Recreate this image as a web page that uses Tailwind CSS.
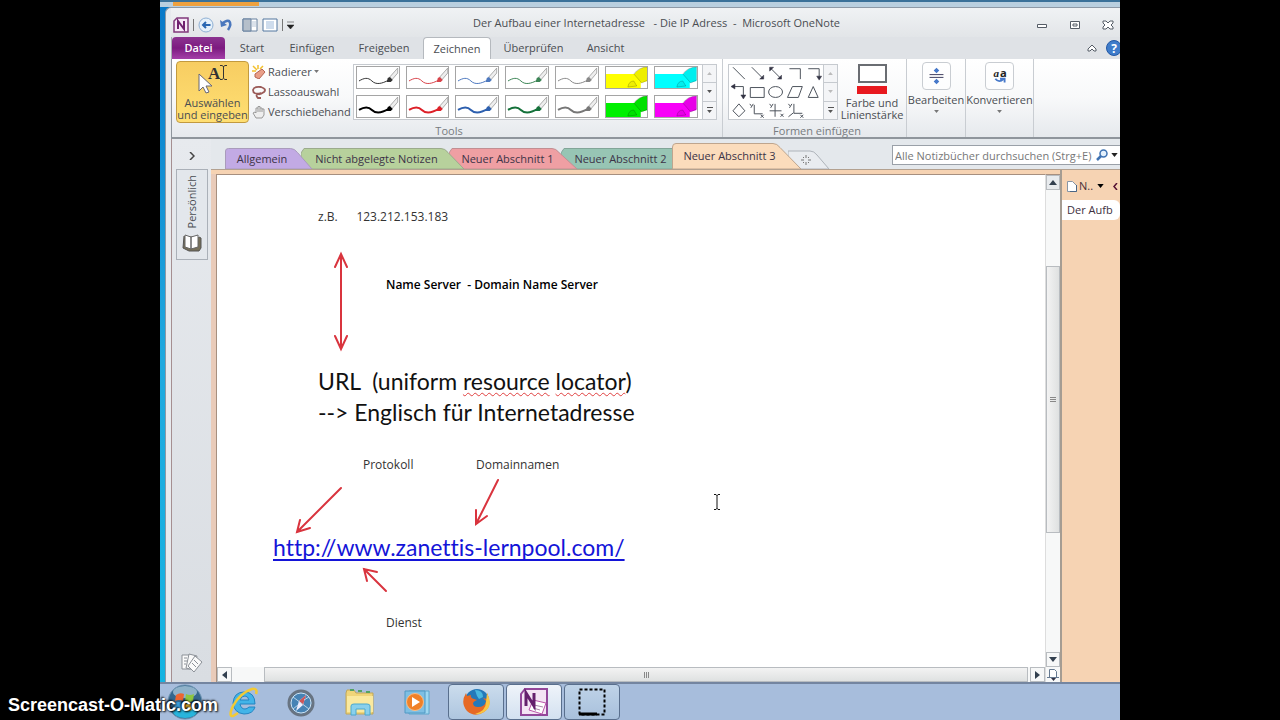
<!DOCTYPE html>
<html lang="de">
<head>
    <meta charset="UTF-8">
    <meta name="viewport" content="width=device-width, initial-scale=1.0">
    <title>Der Aufbau einer Internetadresse - Microsoft OneNote</title>
    <script src="https://cdn.jsdelivr.net/npm/@tailwindcss/browser@4"></script>
</head>
<body class="bg-black font-['Open_Sans','Noto_Sans',sans-serif] text-[11px] leading-3 text-[#4a4d52]">
    <!-- Shared icons -->
    <svg class="hidden">
        <symbol id="pen" viewBox="0 0 42 21">
            <path d="M2 14c5-3 9-4 13 0s10 3 17-1" fill="none" stroke="currentColor"/>
            <path d="M33 10l8-9v5l-6 7z" fill="#eee" stroke="#999" stroke-width=".8"/>
            <path d="M30 15l1-4 2-1 3 3-2 2z" fill="currentColor" stroke="none"/>
        </symbol>
        <symbol id="marker" viewBox="0 0 42 21" preserveAspectRatio="none">
            <path d="M0 7h30v14H0z" fill="currentColor"/>
            <path d="M28 8q5-8 14-8v14l-7 2v5H22q1-5 6-6z" fill="currentColor"/>
            <path d="M28 7q5-7 14-7v13l-6 3zM22 20q1-6 6-6l3 5z" fill="#0001" stroke="#0003"/>
        </symbol>
        <symbol id="down" viewBox="0 0 8 5"><path d="M0 0h8L4 5z" fill="currentColor"/></symbol>
    </svg>

    <div class="relative mx-auto flex min-h-screen w-3/4 flex-col overflow-hidden bg-linear-to-b from-[#0878c8] via-[#1fa9df] to-[#12b5e2]">
        <!-- Window behind -->
        <div class="h-[7px] shrink-0 border-t-2 border-[#3a7199] bg-[#b9cfdf] pl-[13px]">
            <div class="h-1 w-[86px] bg-[#efa13e]"></div>
        </div>

        <!-- OneNote window -->
        <div class="ml-[5px] flex grow flex-col rounded-tl-md border-t border-l border-[#8d99a6] bg-[#e7eaee] pl-[5px]">
            <header class="flex h-[29px] shrink-0 items-center bg-linear-to-b from-[#f0f2f4] to-[#e2e5e8] pr-[6px]">
                <div class="flex w-[302px] shrink-0 items-center gap-1 pt-1 pl-[2px]">
                    <svg class="size-4" viewBox="0 0 16 16"><path d="M4 1h11v14H1V4z" fill="#f6e8f7" stroke="#80397b" stroke-width="1.5"/><path d="M5 12V4l6 8V4" fill="none" stroke="#70206f" stroke-width="2"/></svg>
                    <span class="h-3 w-px bg-[#777]"></span>
                    <button aria-label="Zurück"><svg class="size-4" viewBox="0 0 16 16"><circle cx="8" cy="8" r="7" fill="#e5f1fa" stroke="#8fb0d4"/><path d="M12.500 8H5m3-3L5 8l3 3" fill="none" stroke="#2867b2" stroke-width="2"/></svg></button>
                    <button aria-label="Rückgängig"><svg class="size-4" viewBox="0 0 16 16"><path d="M4 7q4-4 7-3 3 3-1 9" fill="none" stroke="#4a77bd" stroke-width="2.500"/><path d="M2 3l1 7 6-2z" fill="#4a77bd"/></svg></button>
                    <button aria-label="Andocken" class="ml-1"><svg class="size-4" viewBox="0 0 16 16"><path d="M1 2h14v12H1z" fill="#fff" stroke="#66809f"/><path d="M1 2h8v12H1z" fill="#b5bfca" stroke="#66809f"/><path d="M10 5h4m-4 2h4m-4 2h4" stroke="#b7c6d8"/></svg></button>
                    <button aria-label="Ganze Seite"><svg class="size-4" viewBox="0 0 16 16"><path d="M1 2h14v12H1z" fill="#fff" stroke="#53779f"/><path d="M4 5h8m-8 2h8m-8 2h8m-8 2h8" stroke="#9db9da"/></svg></button>
                    <span class="h-3 w-px bg-[#777]"></span>
                    <button aria-label="Anpassen"><svg class="h-2 w-[7px]" viewBox="0 0 7 8"><path d="M0 1h7M0 4h7L3.500 8z" fill="#222" stroke="#222" stroke-width=".5"/></svg></button>
                </div>
                <h1 class="grow whitespace-pre">Der Aufbau einer Internetadresse   - Die IP Adress  -  Microsoft OneNote</h1>
                <div class="flex items-center gap-[21px] pt-1">
                    <button aria-label="Minimieren"><svg class="h-3 w-3" viewBox="0 0 12 12"><path d="M1.500 5.500h9v3h-9z" fill="#fff" stroke="#555c66"/></svg></button>
                    <button aria-label="Maximieren"><svg class="h-3 w-3" viewBox="0 0 12 12"><path d="M1.500 2.500h9v7h-9zM4 5h4v2H4z" fill="#fff" stroke="#555c66"/></svg></button>
                    <button aria-label="Schließen"><svg class="h-3 w-3" viewBox="0 0 12 12"><path d="M1 2h3l2 2 2-2h3v2L9 6l2 2v2H8L6 8l-2 2H1V8l2-2-2-2z" fill="#fff" stroke="#555c66"/></svg></button>
                </div>
            </header>

            <nav class="flex h-[22px] shrink-0 items-stretch border-l border-[#a8adb3] bg-[#dfe2e6]">
                <button class="w-[53px] rounded-t-sm bg-linear-to-b from-[#8c3390] via-[#7c1a80] to-[#a43ea8] font-semibold text-white">Datei</button>
                <button class="w-[54px]">Start</button>
                <button class="w-[66px]">Einfügen</button>
                <button class="w-[78px]">Freigeben</button>
                <button class="w-[68px] rounded-t-sm border border-b-0 border-[#b5b9be] bg-white">Zeichnen</button>
                <button class="w-[85px]">Überprüfen</button>
                <button class="w-[59px]">Ansicht</button>
                <div class="-mr-[2px] ml-auto flex items-center gap-2">
                    <button aria-label="Menüband minimieren"><svg class="h-2 w-3" viewBox="0 0 12 8"><path d="M2 5l4-4 4 4v2H8L6 5 4 7H2z" fill="#fff" stroke="#555c66"/></svg></button>
                    <button aria-label="Hilfe" class="size-4 rounded-full border border-[#2257a5] bg-[#3f7cca] text-xs font-bold text-white">?</button>
                </div>
            </nav>

            <!-- Ribbon -->
            <div class="flex h-20 shrink-0 border-b-2 border-l border-[#8f959c] bg-linear-to-b from-white via-[#f8f9fa] to-[#e6e9ed]">
                <section class="flex w-[551px] shrink-0 flex-col border-r border-[#c9cdd2] pt-[2px] pl-1">
                    <div class="flex h-16">
                        <button class="flex h-[62px] w-[73px] flex-col items-center rounded-sm border border-[#c29a3f] bg-linear-to-b from-[#f7cd62] to-[#ffdf72] pt-[2px]">
                            <svg class="h-8 w-10 shrink-0" viewBox="0 0 40 32"><path d="M6 10v17l4-4 3 6 3-1-3-6h6z" fill="#fff" stroke="#667"/><text x="15" y="15" font-family="Liberation Serif" font-weight="bold" font-size="17" fill="#333">A</text><path d="M27 1.500h2l1.500 1 1.500-1h2M30.500 2v12M27 15.500h2l1.500-1 1.500 1h2" fill="none" stroke="#333"/></svg>
                            <span class="mt-[1px] whitespace-nowrap">Auswählen<br>und eingeben</span>
                        </button>
                        <div class="flex w-[104px] flex-col pl-[3px] whitespace-nowrap">
                            <button class="flex h-[21px] items-center gap-[2px]">
                                <svg class="size-[14px]" viewBox="0 0 14 14"><path d="M1 1l4 4M6 0v4M0 6h4M11 1L8 4" stroke="#f3c02c" stroke-width="1.500"/><path d="M3 9l7-5 3 3-6 7-4-2z" fill="#e99f88" stroke="#b56553"/></svg>
                                Radierer
                                <svg class="h-[3px] w-[5px] text-[#777]"><use href="#down"/></svg>
                            </button>
                            <button class="flex h-5 items-center gap-[2px]">
                                <svg class="size-[14px]" viewBox="0 0 14 14"><path d="M9 8Q1 10 1 5q1-4 8-3 6 2 3 5-4 3-6 2-3 1 0 4h3" fill="none" stroke="#9b5b58" stroke-width="1.800"/></svg>
                                Lassoauswahl
                            </button>
                            <button class="flex h-5 items-center gap-[2px]">
                                <svg class="size-[14px]" viewBox="0 0 14 14"><path d="M4 13L1 8l2-1 1 1V3l2 0V1.500h2V3h2v1h2v6l-2 3zM6 3v4m2-4v4m2-3v3" fill="#eee" stroke="#999"/></svg>
                                Verschiebehand
                            </button>
                        </div>
                        <div class="mt-[3px] flex h-14 w-[364px] justify-between border border-[#c6cacf] bg-white">
                            <div class="grid w-[346px] grid-cols-7 content-start gap-[6px] px-[2px] py-px">
                                <button class="h-[23px] border border-[#a5a5a5] text-[#333]" aria-label="Stift schwarz"><svg class="size-full"><use href="#pen"/></svg></button>
                                <button class="h-[23px] border border-[#a5a5a5] text-[#d8434a]" aria-label="Stift rot"><svg class="size-full"><use href="#pen"/></svg></button>
                                <button class="h-[23px] border border-[#a5a5a5] text-[#4d78be]" aria-label="Stift blau"><svg class="size-full"><use href="#pen"/></svg></button>
                                <button class="h-[23px] border border-[#a5a5a5] text-[#3b8455]" aria-label="Stift grün"><svg class="size-full"><use href="#pen"/></svg></button>
                                <button class="h-[23px] border border-[#a5a5a5] text-[#888]" aria-label="Stift grau"><svg class="size-full"><use href="#pen"/></svg></button>
                                <button class="h-[23px] border border-[#a5a5a5] text-[#ffff00]" aria-label="Textmarker gelb"><svg class="size-full"><use href="#marker"/></svg></button>
                                <button class="h-[23px] border border-[#a5a5a5] text-[#00ffff]" aria-label="Textmarker türkis"><svg class="size-full"><use href="#marker"/></svg></button>
                                <button class="h-[23px] border border-[#a5a5a5] text-black" aria-label="Stift schwarz, dick"><svg class="size-full stroke-2"><use href="#pen"/></svg></button>
                                <button class="h-[23px] border border-[#a5a5a5] text-[#dd2028]" aria-label="Stift rot, dick"><svg class="size-full stroke-2"><use href="#pen"/></svg></button>
                                <button class="h-[23px] border border-[#a5a5a5] text-[#2d5fae]" aria-label="Stift blau, dick"><svg class="size-full stroke-2"><use href="#pen"/></svg></button>
                                <button class="h-[23px] border border-[#a5a5a5] text-[#14713a]" aria-label="Stift grün, dick"><svg class="size-full stroke-2"><use href="#pen"/></svg></button>
                                <button class="h-[23px] border border-[#a5a5a5] text-[#777]" aria-label="Stift grau, dick"><svg class="size-full stroke-2"><use href="#pen"/></svg></button>
                                <button class="h-[23px] border border-[#a5a5a5] text-[#00f000]" aria-label="Textmarker grün"><svg class="size-full"><use href="#marker"/></svg></button>
                                <button class="h-[23px] border border-[#a5a5a5] text-[#f800f8]" aria-label="Textmarker magenta"><svg class="size-full"><use href="#marker"/></svg></button>
                            </div>
                            <div class="flex w-[14px] flex-col divide-y divide-[#c6cacf] border-l border-[#c6cacf] bg-[#f4f5f7] text-[#555]">
                                <button class="flex flex-1 items-center justify-center text-[#bbb]" aria-label="Nach oben"><svg class="h-[3px] w-[5px] rotate-180"><use href="#down"/></svg></button>
                                <button class="flex flex-1 items-center justify-center" aria-label="Nach unten"><svg class="h-[3px] w-[5px]"><use href="#down"/></svg></button>
                                <button class="flex flex-1 flex-col items-center justify-center gap-[2px]" aria-label="Mehr"><span class="h-px w-[6px] bg-[#555]"></span><svg class="h-[3px] w-[5px]"><use href="#down"/></svg></button>
                            </div>
                        </div>
                    </div>
                    <p class="text-center text-[#777b80]">Tools</p>
                </section>

                <section class="flex w-[184px] shrink-0 flex-col border-r border-[#c9cdd2] pt-[2px] pl-[5px]">
                    <div class="flex h-16">
                        <div class="mt-[3px] flex h-14 w-[110px] shrink-0 justify-between border border-[#c6cacf] bg-white">
                            <svg class="h-[54px] w-[95px]" viewBox="0 0 95 54" fill="none" stroke="#4d535c">
                                <path d="M4 2l12 12M23 2l11 11M42 3l10 10M61 3.500h11V14M80 3.500h11V13"/>
                                <path d="M35 14v-4l-4 4zM41 2v4l4-4zM53 14v-4l-4 4zM88.500 11h5L91 15z" fill="#334" stroke="#334" stroke-width=".5"/>
                                <path d="M5 21.500h9.500V31"/>
                                <path d="M6 19v5l-4-2.500zM12 30h5l-2.500 4z" fill="#334" stroke="#334" stroke-width=".5"/>
                                <path d="M21.500 22.500h14v10h-14zM64 21.500h10l-4 11H59zM80 32.500l5-11 5 11z"/>
                                <ellipse cx="47" cy="27" rx="7" ry="5.500"/>
                                <path d="M10 39l6 7-6 6-6-6zM25.500 40v9H34M46.500 39v13M41 46h12M65.500 39v9.500H74M65 48l-5 4"/>
                                <path d="M21 39l1.500 2m2-2l-2.500 4M41 39l1.500 2m2-2L42 43M60 39l1.500 2m2-2L61 43M32 50l3 3m0-3l-3 3M52 49l3 3m0-3l-3 3M72 50l3 3m0-3l-3 3"/>
                            </svg>
                            <div class="flex w-[14px] flex-col divide-y divide-[#c6cacf] border-l border-[#c6cacf] bg-[#f4f5f7] text-[#555]">
                                <button class="flex flex-1 items-center justify-center text-[#bbb]" aria-label="Nach oben"><svg class="h-[3px] w-[5px] rotate-180"><use href="#down"/></svg></button>
                                <button class="flex flex-1 items-center justify-center text-[#bbb]" aria-label="Nach unten"><svg class="h-[3px] w-[5px]"><use href="#down"/></svg></button>
                                <button class="flex flex-1 flex-col items-center justify-center gap-[2px]" aria-label="Mehr"><span class="h-px w-[6px] bg-[#555]"></span><svg class="h-[3px] w-[5px]"><use href="#down"/></svg></button>
                            </div>
                        </div>
                        <button class="flex grow flex-col items-center justify-start pt-[3px]">
                            <span class="h-[19px] w-[29px] border-2 border-[#6a6d72] bg-white"></span>
                            <span class="mt-[3px] mb-[3px] h-2 w-[30px] bg-[#e8191f]"></span>
                            <span>Farbe und<br>Linienstärke</span>
                        </button>
                    </div>
                    <p class="text-center text-[#777b80]">Formen einfügen</p>
                </section>

                <button class="flex w-[59px] shrink-0 flex-col items-center justify-start border-r border-[#c9cdd2] pt-[3px]">
                    <svg class="mb-1 h-7 w-[29px] rounded-sm border border-[#c9cdd2] bg-white/60" viewBox="0 0 29 28"><path d="M7 12.500h15M7 15.500h15" stroke="#335"/><path d="M14.500 5l3 3-3 3-3-3zM14.500 17l3 3-3 3-3-3z" fill="#4779ca"/></svg>
                    Bearbeiten
                    <svg class="mt-1 h-[3px] w-[5px] text-[#777]"><use href="#down"/></svg>
                </button>
                <button class="flex w-[68px] shrink-0 flex-col items-center justify-start border-r border-[#c9cdd2] pt-[3px]">
                    <svg class="mb-1 h-7 w-[29px] rounded-sm border border-[#c9cdd2] bg-white/60" viewBox="0 0 29 28"><text x="8" y="15" font-size="12" font-weight="bold" fill="#222"><tspan font-style="italic" font-family="Liberation Serif">a</tspan><tspan x="15">a</tspan></text><path d="M10 17q4 5 9 0m-4 0h5v4" fill="none" stroke="#4779ca" stroke-width="2"/></svg>
                    Konvertieren
                    <svg class="mt-1 h-[3px] w-[5px] text-[#777]"><use href="#down"/></svg>
                </button>
            </div>

            <!-- Notebook -->
            <div class="flex grow border-l border-[#a58f91]">
                <aside class="flex w-[39px] shrink-0 flex-col items-center bg-linear-to-b from-[#e7eaee] to-[#d9dde2]">
                    <button class="h-[30px]" aria-label="Navigationsleiste erweitern"><svg class="mt-1 h-2 w-[6px]" viewBox="0 0 6 8"><path d="M1 0l4 4-4 4" fill="none" stroke="#444" stroke-width="1.500"/></svg></button>
                    <button class="flex h-[91px] w-8 flex-col items-center justify-between border border-[#aab0b8] bg-[#e3e7ec] pt-[5px] pb-[6px]">
                        <span class="rotate-180 text-[11px] [writing-mode:vertical-rl]">Persönlich</span>
                        <svg class="h-5 w-5" viewBox="0 0 20 20"><path d="M2 3l-1 12 6 3h10l2-3V5l-2-1" fill="#77705a" stroke="#555"/><path d="M3 2l6 2v12l-6-2zM9 4l7-2v12l-7 2z" fill="#fff" stroke="#666"/></svg>
                    </button>
                    <button class="mt-auto mb-2" aria-label="Nicht abgelegte Notizen"><svg class="h-[22px] w-[22px]" viewBox="0 0 22 22" fill="#fafafa" stroke="#8b9097"><path d="M1 3h8v14H1z"/><path d="M8 2l8 2-3 14-8-2z"/><path d="M14 4l7 6-8 10-6-6z"/><path d="M13 8l4 4m-6-1l4 4M3 6h3M3 9h3M3 12h2"/></svg></button>
                </aside>

                <div class="flex min-w-0 grow flex-col">
                    <!-- Section tabs -->
                    <div class="flex h-[30px] shrink-0 items-end bg-[#e4e8ec] pl-[14px] text-[#3c3347]">
                        <button class="relative z-50 -mr-[14px] h-[21px] w-[90px] pr-4">
                            <svg class="absolute inset-0 size-full" viewBox="0 0 90 21" preserveAspectRatio="none"><path d="M.5 21V3q0-2.500 3-2.500h62q4 0 7 4L87 21z" fill="#c2aae4" stroke="#a99bbb"/></svg>
                            <span class="relative">Allgemein</span>
                        </button>
                        <button class="relative z-40 -mr-[18px] h-[21px] w-[166px] pr-[15px]">
                            <svg class="absolute inset-0 size-full" viewBox="0 0 166 21" preserveAspectRatio="none"><path d="M0 21V5L3 .5h137q4 0 7 4L163 21z" fill="#b7d19c" stroke="#9bab8d"/></svg>
                            <span class="relative">Nicht abgelegte Notizen</span>
                        </button>
                        <button class="relative z-30 -mr-[19px] h-[21px] w-[131px] pr-[14px]">
                            <svg class="absolute inset-0 size-full" viewBox="0 0 131 21" preserveAspectRatio="none"><path d="M0 21V5L3 .5h100q4 0 7 4L128 21z" fill="#ef9fa3" stroke="#c18f93"/></svg>
                            <span class="relative">Neuer Abschnitt 1</span>
                        </button>
                        <button class="relative z-20 -mr-[20px] h-[21px] w-[131px] pr-3">
                            <svg class="absolute inset-0 size-full" viewBox="0 0 131 21" preserveAspectRatio="none"><path d="M0 21V5L3 .5h128V21z" fill="#97c5b4" stroke="#82a598"/></svg>
                            <span class="relative">Neuer Abschnitt 2</span>
                        </button>
                        <button class="relative z-60 -mr-[14px] h-[26px] w-[130px] pr-[15px]">
                            <svg class="absolute inset-0 size-full" viewBox="0 0 130 26" preserveAspectRatio="none"><path d="M.5 26V4Q.5.5 4 .5h97q4 0 7 4L129 26z" fill="#fbdcbc" stroke="#bea58e"/></svg>
                            <span class="relative">Neuer Abschnitt 3</span>
                        </button>
                        <button class="relative h-[19px] w-[42px]" aria-label="Neuer Abschnitt">
                            <svg class="size-full" viewBox="0 0 42 19" preserveAspectRatio="none"><path d="M0 19V1h22q4 0 7 4l12 14z" fill="#e9ecf0" stroke="#aeb3ba"/><path d="M18 5v3m0 4v3m-5-5h3m4 0h3m-8-3l1 1m5-1l-1 1m-5 5l1-1m5 1l-1-1" stroke="#777"/></svg>
                        </button>
                        <form class="mb-1 ml-auto flex h-5 w-[228px] items-center border border-r-0 border-[#9aa0a8] bg-white pl-[2px]">
                            <label for="search" class="sr-only">Suchen</label>
                            <input id="search" type="text" placeholder="Alle Notizbücher durchsuchen (Strg+E)" class="h-full min-w-0 grow outline-none placeholder:text-[#777]">
                            <svg class="mr-[3px] h-3 w-3 shrink-0" viewBox="0 0 12 12" fill="none" stroke="#3f73b3"><circle cx="7.500" cy="4.500" r="3.500" fill="#e4f1fd" stroke-width="1.500"/><path d="M5 7l-4 4" stroke-width="2.500"/></svg>
                            <svg class="mr-[2px] h-1 w-[7px] shrink-0 text-[#222]"><use href="#down"/></svg>
                        </form>
                    </div>

                    <div class="flex grow border-t border-[#b3a190] bg-[#f6d3b3]">
                        <!-- Page -->
                        <div class="mt-1 flex min-w-0 grow border-l-[5px] border-[#e9cbb9]">
                            <div class="flex min-w-0 grow flex-col border-t border-l border-[#a68f7f]">
                                <main class="relative grow bg-white text-xs leading-4 text-[#333]">
                                    <svg class="absolute inset-0 size-full" fill="none" stroke="#d9343e" stroke-width="2" stroke-linecap="round">
                                        <path d="M124 79v95M118 92l6-13 6 13M118 161l6 13 6-13"/>
                                        <path d="M124 313l-44 44M83 345l-3 12 13-4"/>
                                        <path d="M281 305l-22 44M259 335v14l11-8"/>
                                        <path d="M169 416l-22-22M150 406l-3-12 13 3"/>
                                    </svg>
                                    <p class="absolute top-[34px] left-[101px] whitespace-pre">z.B.      123.212.153.183</p>
                                    <p class="absolute top-[102px] left-[169px] font-semibold whitespace-pre text-black">Name Server  - Domain Name Server</p>
                                    <p class="absolute top-[191px] left-[101px] font-['Lato',sans-serif] text-[23px] leading-[31px] whitespace-pre text-[#111] [font-variant-ligatures:none]">URL  (uniform <span class="underline decoration-[#e04040] decoration-wavy decoration-1 underline-offset-2">resource</span> <span class="underline decoration-[#e04040] decoration-wavy decoration-1 underline-offset-2">locator</span>)<br>--> Englisch für Internetadresse</p>
                                    <p class="absolute top-[282px] left-[146px]">Protokoll</p>
                                    <p class="absolute top-[282px] left-[259px]">Domainnamen</p>
                                    <a href="#" class="absolute top-[357px] left-[56px] font-['Lato',sans-serif] text-[23px] leading-[31px] text-[#1414d8] underline decoration-2 underline-offset-3 [font-variant-ligatures:none] [text-decoration-skip-ink:none]">http://www.zanettis-lernpool.com/</a>
                                    <p class="absolute top-[440px] left-[169px]">Dienst</p>
                                    <svg class="absolute top-[319px] left-[496px] h-4 w-2" viewBox="0 0 8 16"><path d="M1 .5h2l1 1 1-1h2M4 1v14M1 15.500h2l1-1 1 1h2" fill="none" stroke="#111"/></svg>
                                </main>
                                <div class="flex h-[15px] shrink-0 bg-[#f7f8f8]">
                                    <button class="flex w-[15px] items-center justify-center border border-[#b8bcc0]" aria-label="Links"><svg class="h-2 w-[5px]" viewBox="0 0 5 8"><path d="M5 0v8L0 4z" fill="#33404f"/></svg></button>
                                    <div class="ml-8 flex grow items-center justify-center gap-[1px] border border-[#b8bcc0] bg-linear-to-b from-[#f3f3f3] to-[#dfe1e1]">
                                        <span class="h-[6px] w-px bg-[#888]"></span><span class="h-[6px] w-px bg-[#888]"></span><span class="h-[6px] w-px bg-[#888]"></span>
                                    </div>
                                    <button class="ml-[2px] flex w-[15px] items-center justify-center border border-[#b8bcc0]" aria-label="Rechts"><svg class="h-2 w-[5px]" viewBox="0 0 5 8"><path d="M0 0v8l5-4z" fill="#33404f"/></svg></button>
                                </div>
                            </div>
                            <div class="flex w-[15px] shrink-0 flex-col border-t border-l border-t-[#a68f7f] border-l-[#ddd] bg-[#f7f8f8]">
                                <button class="flex h-[15px] items-center justify-center border border-[#b8bcc0] bg-[#e8ebee] text-[#33404f]" aria-label="Hoch"><svg class="h-[5px] w-2 rotate-180"><use href="#down"/></svg></button>
                                <div class="mt-[76px] flex h-[267px] flex-col items-center justify-center gap-[1px] border border-[#b8bcc0] bg-linear-to-r from-[#f3f3f3] to-[#dfe1e1]">
                                    <span class="h-px w-[6px] bg-[#888]"></span><span class="h-px w-[6px] bg-[#888]"></span><span class="h-px w-[6px] bg-[#888]"></span>
                                </div>
                                <button class="mt-auto flex h-[15px] items-center justify-center border border-[#b8bcc0] text-[#33404f]" aria-label="Runter"><svg class="h-[5px] w-2"><use href="#down"/></svg></button>
                                <button class="flex h-[15px] items-center justify-center" aria-label="Neue Seite"><svg class="h-3 w-3" viewBox="0 0 12 12"><path d="M2.500 8V.5h5l2 2V8M0 8.500h12" fill="#fff" stroke="#667a91"/><path d="M4 9h5L6.500 12z" fill="#334"/></svg></button>
                            </div>
                        </div>
                        <!-- Page list -->
                        <aside class="w-[60px] shrink-0 border-l-2 border-[#a59c92]">
                            <div class="flex h-7 items-center pt-1 pl-[5px] text-[#4a3038]">
                                <svg class="h-3 w-[10px]" viewBox="0 0 10 12"><path d="M.5 1.500h5l4 4v6h-9z" fill="#fff" stroke="#8795a6"/><path d="M9.500 5v6.500H3" fill="none" stroke="#4b6685"/></svg>
                                <button class="ml-[2px] flex items-center gap-1">N.. <svg class="h-1 w-[7px] text-black"><use href="#down"/></svg></button>
                                <button class="mr-[2px] ml-auto" aria-label="Einblenden"><svg class="h-[7px] w-[5px]" viewBox="0 0 5 7"><path d="M4 0L1 3.500 4 7" fill="none" stroke="#513" stroke-width="1.500"/></svg></button>
                            </div>
                            <button class="mt-[2px] block h-5 w-full rounded-r-md bg-white pl-[5px] text-left text-[#403040]">Der Aufb</button>
                        </aside>
                    </div>
                </div>
            </div>
        </div>

        <!-- Taskbar -->
        <footer class="flex h-[38px] shrink-0 items-center border-t-2 border-[#7485a0] bg-[#a7bddc] pl-[7px]">
            <button class="w-9" aria-label="Start"><svg class="size-9" viewBox="0 0 36 36"><circle cx="18" cy="18" r="17" fill="#35678d" stroke="#6f94b2"/><ellipse cx="18" cy="27" rx="12" ry="7" fill="#28b5dc"/><ellipse cx="18" cy="8" rx="12" ry="6" fill="#8fb2c9"/><path d="M9 11q4-3 8-1l-1 7q-4-2-8 0z" fill="#ed6530"/><path d="M19 10q4 2 8 0l-1 7q-4 2-8 0z" fill="#8dc63f"/><path d="M8 19q4-2 8 0l-1 7q-4-2-8 0z" fill="#3ba1df"/><path d="M18 19q4 2 8 0l-1 7q-4 2-8 0z" fill="#fcc530"/></svg></button>
            <button class="ml-[25px] w-8" aria-label="Internet Explorer"><svg class="size-8" viewBox="0 0 32 32"><path d="M27 21q-2 7-11 7-10-1-11-11Q6 6 16 6q11 0 11 12H12q1 5 5 5 2 0 4-2zM12 14h9q-1-4-4-4-4 0-5 4z" fill="#42b4e8" stroke="#2384c1"/><path d="M28 8q2-6-4-5Q12 7 5 20 0 31 5 30l5-3" fill="none" stroke="#f2ca35" stroke-width="2.500"/></svg></button>
            <button class="ml-[25px] w-8" aria-label="Safari"><svg class="size-8" viewBox="0 0 32 32"><circle cx="16" cy="17" r="12" fill="#4683b5" stroke="#687482" stroke-width="3"/><circle cx="16" cy="17" r="10" fill="none" stroke="#d0e4f3"/><path d="M21 9l-3 10-7 6 3-10z" fill="#eef"/><path d="M21 9l-3 10-4-4z" fill="#ce5559"/><path d="M8 11l16 12M8 23l5-4m6-5l5-3" stroke="#bbd5e8"/></svg></button>
            <button class="ml-[27px] w-8" aria-label="Explorer"><svg class="size-8" viewBox="0 0 32 32"><path d="M3 4h7l2 3h17v21H2V7z" fill="#f0d579" stroke="#c1a759"/><path d="M3 10h26v16H3z" fill="#fae99f"/><path d="M6 4h4M14 5h4M22 6h4" stroke="#54a264" stroke-width="2"/><path d="M7 29V20q0-2 3-2h13q3 0 3 2v9h-5v-6h-9v6z" fill="#89d0ec" stroke="#4ba8cf"/></svg></button>
            <button class="ml-[25px] w-8" aria-label="Media Player"><svg class="size-8" viewBox="0 0 32 32"><path d="M8 5h20v23H8z" fill="#9fd7f0" stroke="#5ca6cc"/><path d="M4 5h20v22H4z" fill="#7ebfe3" stroke="#5098c3"/><circle cx="14" cy="16" r="8.500" fill="#f08128" stroke="#fcbc83"/><path d="M11 11v10l8-5z" fill="#fff"/></svg></button>
            <button class="ml-[15px] flex h-9 w-14 items-center justify-center rounded-sm border border-[#596f8d] bg-linear-to-b from-[#cbdced] to-[#aec6df]" aria-label="Firefox"><svg class="size-8" viewBox="0 0 32 32"><circle cx="17" cy="15" r="12" fill="#2479b9"/><path d="M15 4q8 0 8 7l-4 2-2-3z" fill="#48b7df"/><path d="M27 7q6 13-3 19-9 6-17-1-7-8-1-18l1 3 4-1q-1 3 3 4l3 1q-3 1-4 3 0 4 5 4 7 0 8-6l-3-3 4 1z" fill="#e66925"/><path d="M27 7q7 13-3 19-5 3-9 2 11-3 11-12z" fill="#f9c642"/></svg></button>
            <button class="ml-[2px] flex h-9 w-14 items-center justify-center rounded-sm border border-[#596f8d] bg-linear-to-b from-[#eff4fa] to-[#d3e1f0]" aria-label="OneNote"><svg class="size-7" viewBox="0 0 28 28"><path d="M5 1h22v26H1V6z" fill="#f4e4f4" stroke="#93479a" stroke-width="2"/><path d="M13 12l13 3-4 11-13-4z" fill="#fff" stroke="#b5a"/><path d="M13 20l7 2m-6-5l9 2" stroke="#a8a"/><path d="M6 18V5l8 13V5" fill="none" stroke="#65206d" stroke-width="3"/></svg></button>
            <button class="ml-[2px] flex h-9 w-14 items-center justify-center rounded-sm border border-[#596f8d] bg-linear-to-b from-[#bfd3e8] to-[#a8c0dc]" aria-label="Aufnahme"><svg class="size-7" viewBox="0 0 28 28"><path d="M1.500 1.500h25v25h-25z" fill="none" stroke="#000" stroke-width="2" stroke-dasharray="3 2"/><path d="M1 26h18" stroke="#000" stroke-width="3"/></svg></button>
        </footer>
    </div>

    <p class="absolute bottom-[5px] left-2 z-70 font-['Liberation_Sans',sans-serif] text-lg leading-5 font-bold text-white [text-shadow:1px_1px_2px_#000,-1px_-1px_2px_#000]">Screencast-O-Matic.com</p>
</body>
</html>
